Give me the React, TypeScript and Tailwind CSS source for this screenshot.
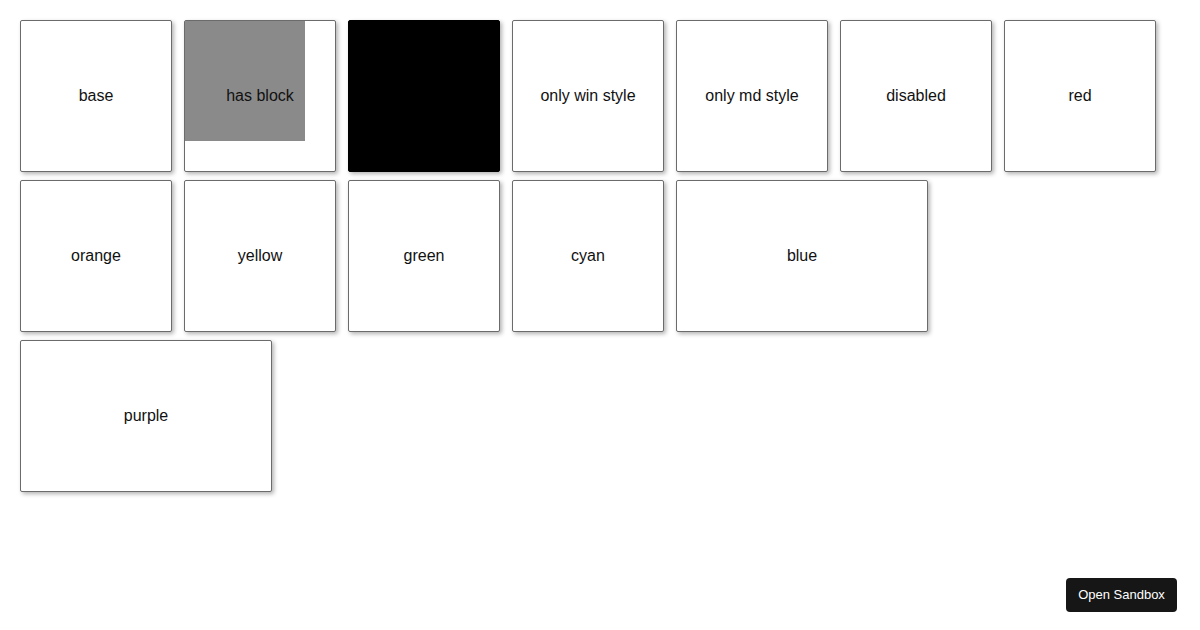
import React from "react";

function Card({ label, wide, dark, block }: { label?: string; wide?: boolean; dark?: boolean; block?: boolean }) {
  return (
    <div
      className={`relative h-[152px] ${wide ? "w-[252px]" : "w-[152px]"} ${dark ? "bg-black border-black" : "bg-white border-[#6b6b6b]"} border rounded-[2px] shadow-[2px_2px_4px_rgba(0,0,0,0.3)] flex items-center justify-center text-[16px] text-[#111]`}
    >
      {block && <div className="absolute left-0 top-0 w-[120px] h-[120px] bg-[#8a8a8a]" />}
      {label && <span className="relative">{label}</span>}
    </div>
  );
}

export default function App() {
  return (
    <div className="relative w-[1200px] h-[630px] bg-white overflow-hidden" style={{ fontFamily: '"Liberation Sans", Arial, sans-serif' }}>
      <div className="p-[20px] flex flex-col gap-[8px]">
        <div className="flex gap-[12px]">
          <Card label="base" />
          <Card label="has block" block />
          <Card dark />
          <Card label="only win style" />
          <Card label="only md style" />
          <Card label="disabled" />
          <Card label="red" />
        </div>
        <div className="flex gap-[12px]">
          <Card label="orange" />
          <Card label="yellow" />
          <Card label="green" />
          <Card label="cyan" />
          <Card label="blue" wide />
        </div>
        <div className="flex gap-[12px]">
          <Card label="purple" wide />
        </div>
      </div>
      <button className="absolute left-[1066px] top-[578px] w-[111px] h-[34px] rounded-[4px] bg-[#161616] text-white text-[13px] flex items-center justify-center">
        Open Sandbox
      </button>
    </div>
  );
}
